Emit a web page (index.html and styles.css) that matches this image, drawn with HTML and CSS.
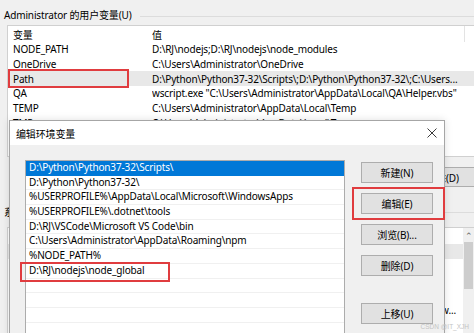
FILE: index.html
```html
<!DOCTYPE html>
<html lang="zh-CN">
<head>
    <meta charset="UTF-8">
    <title>编辑环境变量</title>
    <link rel="stylesheet" href="styles.css">
</head>
<body>
    <div class="envwin">
        <div class="group-title"><span>Administrator 的用户变量(U)</span></div>
        <div class="varlist user-list">
            <div class="vhead"><span class="name">变量</span><span class="value">值</span></div>
            <div class="vrow"><span class="name">NODE_PATH</span><span class="value">D:\RJ\nodejs;D:\RJ\nodejs\node_modules</span></div>
            <div class="vrow"><span class="name">OneDrive</span><span class="value">C:\Users\Administrator\OneDrive</span></div>
            <div class="vrow hover"><span class="name">Path</span><span class="value">D:\Python\Python37-32\Scripts\;D:\Python\Python37-32\;C:\Users...</span><i class="mark mark-path"></i></div>
            <div class="vrow"><span class="name">QA</span><span class="value">wscript.exe "C:\Users\Administrator\AppData\Local\QA\Helper.vbs"</span></div>
            <div class="vrow"><span class="name">TEMP</span><span class="value">C:\Users\Administrator\AppData\Local\Temp</span></div>
            <div class="vrow"><span class="name">TMP</span><span class="value">C:\Users\Administrator\AppData\Local\Temp</span></div>
        </div>
        <div class="btnrow">
            <button class="winbtn">新建(N)...</button>
            <button class="winbtn">编辑(E)...</button>
            <button class="winbtn">删除(D)</button>
        </div>
        <div class="group-title sys-title"><span>系统变量(S)</span></div>
        <div class="varlist sys-list">
            <div class="sys-rows">
                <div class="vhead"><span class="name">变量</span><span class="value">值</span></div>
                <div class="vrow hover"><span class="name">ComSpec</span><span class="value">C:\Windows\system32\cmd.exe</span></div>
                <div class="vrow"><span class="name">DriverData</span><span class="value">C:\Windows\System32\Drivers\DriverData</span></div>
                <div class="vrow"><span class="name">NUMBER_OF_PROCESSORS</span><span class="value">8</span></div>
                <div class="vrow"><span class="name">OS</span><span class="value">Windows_NT</span></div>
                <div class="vrow"><span class="name">Path</span><span class="value tail">C:\Windows\system32;C:\Windows;C:\Windows\System32\Wbem;C:\Windows\System32\WindowsPo w...</span></div>
                <div class="vrow"><span class="name">PATHEXT</span><span class="value">.COM;.EXE;.BAT;.CMD;.VBS;.VBE;.JS;.JSE;.WSF;.WSH;.MSC</span></div>
            </div>
            <div class="vscroll"><span class="arrow">&#8963;</span><span class="thumb"></span></div>
        </div>
    </div>

    <div class="dialog">
        <div class="dlg-title">
            <span>编辑环境变量</span>
            <svg class="dlg-close" width="10" height="10" viewBox="0 0 10 10"><path d="M0.5 0.5L9.5 9.5M9.5 0.5L0.5 9.5" stroke="#3c3c3c" stroke-width="1" fill="none"/></svg>
        </div>
        <div class="dlg-body">
            <div class="pathlist">
                <div class="prow selected">D:\Python\Python37-32\Scripts\</div>
                <div class="prow">D:\Python\Python37-32\</div>
                <div class="prow">%USERPROFILE%\AppData\Local\Microsoft\WindowsApps</div>
                <div class="prow">%USERPROFILE%\.dotnet\tools</div>
                <div class="prow">D:\RJ\VSCode\Microsoft VS Code\bin</div>
                <div class="prow">C:\Users\Administrator\AppData\Roaming\npm</div>
                <div class="prow">%NODE_PATH%</div>
                <div class="prow">D:\RJ\nodejs\node_global<i class="mark mark-global"></i></div>
                <div class="prow"></div>
                <div class="prow"></div>
                <div class="prow"></div>
                <div class="prow"></div>
                <div class="prow"></div>
            </div>
            <div class="dlg-buttons">
                <button class="winbtn">新建(N)</button>
                <button class="winbtn">编辑(E)<i class="mark mark-edit"></i></button>
                <button class="winbtn">浏览(B)...</button>
                <button class="winbtn">删除(D)</button>
                <button class="winbtn move-up">上移(U)</button>
            </div>
        </div>
    </div>

    <div class="watermark">CSDN @IT_XJH</div>
</body>
</html>
```

FILE: styles.css
```css
* {
    box-sizing: border-box;
}
html, body {
    margin: 0;
}
body {
    width: 474px;
    height: 333px;
    overflow: hidden;
    position: relative;
    background: #f0f0f0;
    color: #000;
    font-family: "Noto Sans", "Noto Sans CJK SC", sans-serif;
    font-size: 10px;
    letter-spacing: -0.15px;
}

/* background window: 环境变量 */
.envwin {
    width: 480px;
}
.group-title {
    height: 25px;
    padding: 5px 0 0 4px;
    line-height: 14px;
    display: flex;
    align-items: center;
    gap: 8px;
}
.group-title::after {
    content: "";
    flex: 1;
    height: 1px;
    background: #dcdcdc;
    margin-top: 2px;
}
.varlist {
    margin-left: 7px;
    background: #fff;
    border: 1px solid #d0d0d0;
}
.user-list {
    height: 132px;
}
.vhead {
    height: 16px;
    display: flex;
    align-items: center;
    padding-top: 1px;
}
.user-list .vhead {
    width: 457px;
    border-right: 1px solid #e3e3e3;
}
.vrow {
    position: relative;
    height: 14.7px;
    display: flex;
    align-items: center;
    white-space: nowrap;
}
.vrow.hover {
    background: #e8e8e8;
}
.name {
    width: 144px;
    padding-left: 5px;
    flex-shrink: 0;
}
.value {
    flex: 1;
    overflow: hidden;
}
.btnrow {
    display: flex;
    justify-content: flex-end;
    gap: 8px;
    margin-top: 10px;
}
.btnrow .winbtn {
    width: 75px;
    height: 20px;
}
.sys-title {
    height: 40px;
    padding-top: 18px;
    align-items: flex-start;
}
.sys-title::after {
    margin-top: 7px;
}
.sys-list {
    height: 140px;
    display: flex;
    margin-right: 5px;
}
.sys-rows {
    flex: 1;
    min-width: 0;
}
.value.tail {
    display: flex;
    justify-content: flex-end;
    width: 304px;
    flex: none;
}
.vscroll {
    width: 11px;
    background: #f0f0f0;
    display: flex;
    flex-direction: column;
    align-items: center;
}
.vscroll .arrow {
    height: 14px;
    line-height: 16px;
    font-size: 9px;
    color: #606060;
}
.vscroll .thumb {
    width: 9px;
    height: 47px;
    background: #cdcdcd;
}

/* buttons */
.winbtn {
    position: relative;
    font: inherit;
    letter-spacing: inherit;
    color: #000;
    background: #e1e1e1;
    border: 1px solid #adadad;
    padding: 0;
    white-space: nowrap;
}

/* red annotation boxes */
.mark {
    position: absolute;
    border: 2px solid #e03c3f;
    pointer-events: none;
}
.mark-path {
    left: 0;
    top: -2px;
    width: 121px;
    height: 19px;
}
.mark-global {
    left: -6px;
    top: -2px;
    width: 150px;
    height: 20px;
}
.mark-edit {
    left: -10px;
    top: -7px;
    width: 93px;
    height: 33px;
}

/* dialog: 编辑环境变量 */
.dialog {
    position: absolute;
    left: 9px;
    top: 120px;
    width: 436px;
    height: 240px;
    border: 1px solid #a6a6a6;
    background: #f0f0f0;
    box-shadow: 0 0 8px rgba(0, 0, 0, 0.12);
}
.dlg-title {
    height: 24px;
    background: #fff;
    display: flex;
    align-items: center;
    justify-content: space-between;
    padding: 0 7px 0 6px;
}
.dlg-close {
    margin-top: -1px;
}
.dlg-body {
    display: flex;
    gap: 16px;
    padding: 15px 10px 0 15px;
}
.pathlist {
    width: 320px;
    height: 200px;
    background: #fff;
    border: 1px solid #acacac;
}
.prow {
    position: relative;
    height: 14.7px;
    line-height: 13.7px;
    padding-left: 3px;
    border-bottom: 1px solid #f0f0f0;
    white-space: nowrap;
}
.prow.selected {
    background: #0078d7;
    color: #fff;
    border-bottom-color: #0078d7;
}
.dlg-buttons {
    width: 72px;
    display: flex;
    flex-direction: column;
    gap: 10px;
    padding-top: 2px;
}
.dlg-buttons .winbtn {
    height: 21px;
}
.dlg-buttons .move-up {
    margin-top: 17px;
}

.watermark {
    position: absolute;
    right: 5px;
    bottom: 3px;
    font-family: "Liberation Sans", sans-serif;
    font-size: 6.5px;
    letter-spacing: 0;
    color: #c4c4c4;
}
```
